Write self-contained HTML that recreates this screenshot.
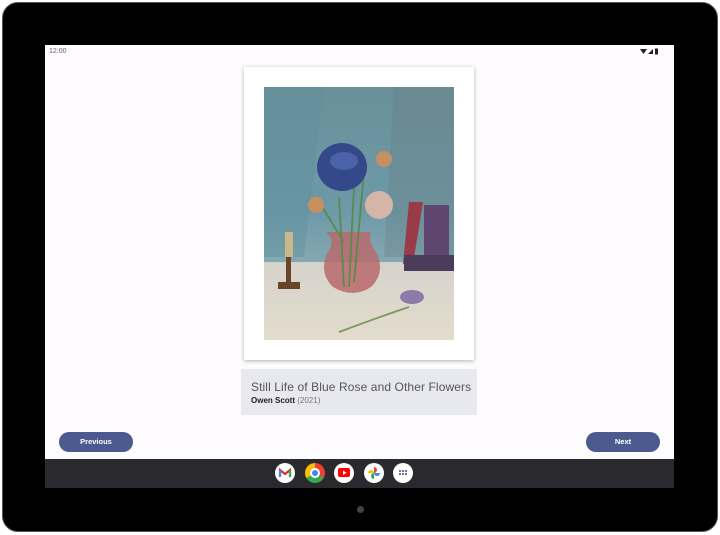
<!DOCTYPE html>
<html><head><meta charset="utf-8"><style>
*{margin:0;padding:0;box-sizing:border-box}
body{width:720px;height:535px;background:#fff;position:relative;overflow:hidden;font-family:"Liberation Sans",sans-serif}
.tab{position:absolute;left:2px;top:2px;width:716px;height:530px;background:#000;border-radius:16px;border:1px solid #555}
.screen{position:absolute;left:45px;top:45px;width:629px;height:443px;background:#fdfbfe}
.time{position:absolute;left:4px;top:3px;font-size:7px;color:#666}
.card{position:absolute;left:199px;top:22px;width:230px;height:293px;background:#fff;box-shadow:0 1px 4px rgba(0,0,0,.3)}
.cap{position:absolute;left:196px;top:324px;width:236px;height:46px;background:#e8e8f0}
.t1{position:absolute;left:10px;top:11px;font-size:12px;color:#555;letter-spacing:.1px}
.t2{position:absolute;left:10px;top:27px;font-size:8px;color:#222;font-weight:bold}
.t2 span{font-weight:normal;color:#777}
.btn{position:absolute;top:387px;width:74px;height:20px;border-radius:10px;background:#4b5a8f;color:#fff;font-size:7.5px;font-weight:bold;text-align:center;line-height:20px}
.dock{position:absolute;left:0;top:414px;width:629px;height:29px;background:#2a292e}
.ic{position:absolute;top:4px;width:20px;height:20px;border-radius:50%;background:#fff}
</style></head><body>
<div class="tab"></div>
<div style="position:absolute;left:357px;top:506px;width:7px;height:7px;border-radius:50%;background:#444"></div>
<div class="screen">
<div class="time">12:00</div>
<svg style="position:absolute;right:14px;top:3px" width="20" height="7"><path d="M0 1h7l-3.5 5z" fill="#222"/><path d="M8 6l5-5v5z" fill="#222"/><rect x="15" y="0.5" width="3" height="6" fill="#222"/></svg>
<div class="card">
<svg style="position:absolute;left:20px;top:20px" width="190" height="253" viewBox="0 0 190 253">
<defs><linearGradient id="bg" x1="0" y1="0" x2="0" y2="1"><stop offset="0" stop-color="#6a9099"/><stop offset=".5" stop-color="#6d9aa8"/><stop offset="1" stop-color="#a9bfc0"/></linearGradient>
<linearGradient id="tb" x1="0" y1="0" x2="0" y2="1"><stop offset="0" stop-color="#d6d3cb"/><stop offset="1" stop-color="#e3dccd"/></linearGradient></defs>
<rect width="190" height="253" fill="url(#bg)"/>
<path d="M0 0h60l-20 170H0z" fill="#5f8e9a" opacity=".4"/>
<path d="M130 0h60v170h-70z" fill="#6a7e84" opacity=".35"/>
<rect y="175" width="190" height="78" fill="url(#tb)"/>
<path d="M145 115h14l-10 62h-10z" fill="#9a3b4a"/><path d="M160 118h25v55h-25z" fill="#5e4670"/><path d="M140 168h50v16h-50z" fill="#4b3c5a"/>
<path d="M21 145h8v25h-8z" fill="#c9b98a"/><path d="M14 195h22v7H14z" fill="#6a4426"/><path d="M22 170h5v28h-5z" fill="#6a4426"/>
<path d="M62 145h45q-4 8 5 20q10 20 -5 35q-18 12 -38 0q-15 -15 -5 -35q8 -12 -2 -20z" fill="#b86a6c" opacity=".85"/>
<path d="M75 110l5 90M90 100l-5 100M100 85l-10 110M55 115l25 40" stroke="#5b8a4a" stroke-width="1.8"/>
<ellipse cx="78" cy="80" rx="25" ry="24" fill="#34498a"/><ellipse cx="80" cy="74" rx="14" ry="9" fill="#4a62a8"/>
<circle cx="120" cy="72" r="8" fill="#c79060"/><circle cx="52" cy="118" r="8" fill="#c89060"/><circle cx="115" cy="118" r="14" fill="#d4b5a8"/>
<path d="M75 245q40 -15 70 -25" stroke="#7a9a5a" stroke-width="1.8" fill="none"/><ellipse cx="148" cy="210" rx="12" ry="7" fill="#8e7aa8"/>
</svg></div>
<div class="cap"><div class="t1">Still Life of Blue Rose and Other Flowers</div><div class="t2">Owen Scott <span>(2021)</span></div></div>
<div class="btn" style="left:14px">Previous</div>
<div class="btn" style="left:541px">Next</div>
<div class="dock">
<div class="ic" style="left:230px"><svg width="20" height="20"><path d="M5 14V7l5 4 5-4v7" stroke="#d93025" stroke-width="2.2" fill="none"/><path d="M5 14V7" stroke="#4285f4" stroke-width="2.2"/><path d="M15 14V7" stroke="#34a853" stroke-width="2.2"/></svg></div>
<div class="ic" style="left:260px;background:conic-gradient(#ea4335 0 120deg,#34a853 120deg 240deg,#fbbc05 240deg)"><div style="position:absolute;left:5px;top:5px;width:10px;height:10px;border-radius:50%;background:#4285f4;border:2px solid #fff"></div></div>
<div class="ic" style="left:289px"><div style="position:absolute;left:4px;top:5px;width:12px;height:9px;border-radius:2px;background:#f00"></div><svg style="position:absolute;left:0;top:0" width="20" height="20"><path d="M9 7.5v4.5l3.5-2.2z" fill="#fff"/></svg></div>
<div class="ic" style="left:319px"><svg width="20" height="20"><path d="M10 10V4a3 3 0 0 1 0 6z" fill="#ea4335"/><path d="M10 10h6a3 3 0 0 1-6 0z" fill="#4285f4"/><path d="M10 10v6a3 3 0 0 1 0-6z" fill="#34a853"/><path d="M10 10H4a3 3 0 0 1 6 0z" fill="#fbbc05"/></svg></div>
<div class="ic" style="left:348px"><svg width="20" height="20" fill="#3c4a7a"><circle cx="7" cy="8" r="1"/><circle cx="10" cy="8" r="1"/><circle cx="13" cy="8" r="1"/><circle cx="7" cy="11" r="1"/><circle cx="10" cy="11" r="1"/><circle cx="13" cy="11" r="1"/></svg></div>
</div>
</div>
</body></html>
